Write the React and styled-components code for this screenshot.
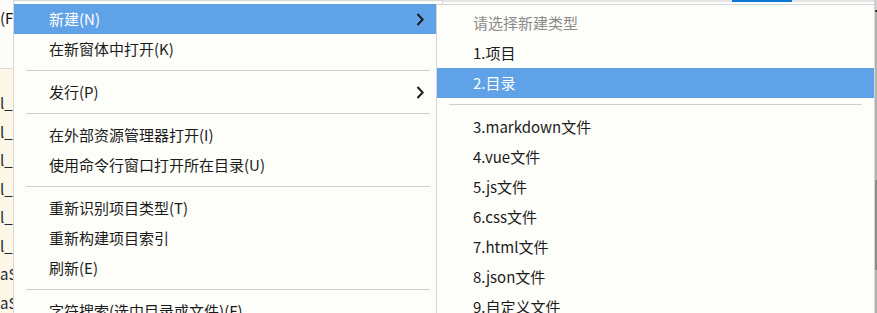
import React from 'react';
import styled, { createGlobalStyle } from 'styled-components';

const GlobalStyle = createGlobalStyle`
  html, body {
    margin: 0;
    padding: 0;
    background: #fcfcfa;
  }
  body {
    font-family: "Noto Sans CJK SC", "Noto Sans", sans-serif;
  }
`;

const Screen = styled.div`
  position: relative;
  width: 877px;
  height: 313px;
  overflow: hidden;
  display: flex;
  background: #fcfcfa;
`;

const LeftPane = styled.div`
  width: 13px;
  flex-shrink: 0;
  display: flex;
  flex-direction: column;
  overflow: hidden;
`;

const PaneHead = styled.div`
  height: 69px;
  flex-shrink: 0;
  border-bottom: 1px solid #dcd8cc;
  background: #fcfcfa;
  font-size: 15px;
  line-height: 18px;
  padding-top: 9px;
  box-sizing: border-box;
  color: #111;
  white-space: nowrap;
`;

const FileList = styled.div`
  flex: 1;
  background: #fdf7e7;
  padding-top: 20px;
  display: flex;
  flex-direction: column;
`;

const FileRow = styled.div`
  height: 28.5px;
  line-height: 28.5px;
  font-size: 15px;
  color: #1c2a3a;
  white-space: nowrap;
`;

const Workspace = styled.div`
  flex: 1;
  display: flex;
  flex-direction: column;
`;

const TabStrip = styled.div`
  height: 2px;
  display: flex;
  background: #e6e6e6;
  padding-left: 719px;
`;

const ActiveTab = styled.div`
  width: 60px;
  background: #0a78d4;
`;

const Scrollbar = styled.div`
  width: 3px;
  flex-shrink: 0;
  background: linear-gradient(#cfcfcf 0 10px, #3a3a3a 10px 12px, #b5b3ad 12px 180px, #8c8a85 180px 270px, #b5b3ad 270px);
`;

const Menu = styled.div`
  position: absolute;
  top: ${(p) => p.$top}px;
  left: ${(p) => p.$left}px;
  width: ${(p) => p.$width}px;
  box-sizing: border-box;
  background: #fdfdf9;
  border: 1px solid #d7d7d7;
  padding: 3px 0;
  font-size: 15px;
  z-index: ${(p) => p.$z};
`;

const Item = styled.div`
  height: 30px;
  display: flex;
  align-items: center;
  padding: 0 18px 0 ${(p) => p.$indent}px;
  white-space: nowrap;
  color: ${(p) => (p.$active ? '#ffffff' : p.$muted ? '#8a8a8a' : '#1b1b1b')};
  background: ${(p) => (p.$active ? '#5fa2e7' : 'transparent')};
`;

const Label = styled.span`
  flex: 1;
  line-height: 30px;
`;

const Separator = styled.div`
  height: 1px;
  background: #d0d0d0;
  margin: ${(p) => p.$top}px 12px ${(p) => p.$bottom}px;
`;

const Chevron = () => (
  <svg width="8" height="13" viewBox="0 0 8 13">
    <path d="M1.5 1 L6.7 6.5 L1.5 12" fill="none" stroke="#1a1a1a" strokeWidth="2" />
  </svg>
);

const mainItems = [
  { label: '新建(N)', sub: true, active: true },
  { label: '在新窗体中打开(K)' },
  'sep',
  { label: '发行(P)', sub: true },
  'sep',
  { label: '在外部资源管理器打开(I)' },
  { label: '使用命令行窗口打开所在目录(U)' },
  'sep',
  { label: '重新识别项目类型(T)' },
  { label: '重新构建项目索引' },
  { label: '刷新(E)' },
  'sep',
  { label: '字符搜索(选中目录或文件)(F)' },
];

const subItems = [
  { label: '请选择新建类型', muted: true },
  { label: '1.项目' },
  { label: '2.目录', active: true },
  'sep',
  { label: '3.markdown文件' },
  { label: '4.vue文件' },
  { label: '5.js文件' },
  { label: '6.css文件' },
  { label: '7.html文件' },
  { label: '8.json文件' },
  { label: '9.自定义文件' },
];

const files = ['l_', 'l_', 'l_', 'l_', 'l_', 'l_', 'aS', 'aS'];

export default function App() {
  return (
    <>
      <GlobalStyle />
      <Screen>
        <LeftPane>
          <PaneHead>(F</PaneHead>
          <FileList>
            {files.map((f, i) => (
              <FileRow key={i}>{f}</FileRow>
            ))}
          </FileList>
        </LeftPane>
        <Workspace>
          <TabStrip>
            <ActiveTab />
          </TabStrip>
        </Workspace>
        <Scrollbar />

        <Menu $top={0} $left={13} $width={430} $z={1}>
          {mainItems.map((it, i) =>
            it === 'sep' ? (
              <Separator key={i} $top={6} $bottom={6} />
            ) : (
              <Item key={i} $indent={35} $active={it.active}>
                <Label>{it.label}</Label>
                {it.sub && <Chevron />}
              </Item>
            )
          )}
        </Menu>

        <Menu $top={4} $left={436} $width={439} $z={2}>
          {subItems.map((it, i) =>
            it === 'sep' ? (
              <Separator key={i} $top={6} $bottom={7} />
            ) : (
              <Item key={i} $indent={36} $active={it.active} $muted={it.muted}>
                <Label>{it.label}</Label>
              </Item>
            )
          )}
        </Menu>
      </Screen>
    </>
  );
}
